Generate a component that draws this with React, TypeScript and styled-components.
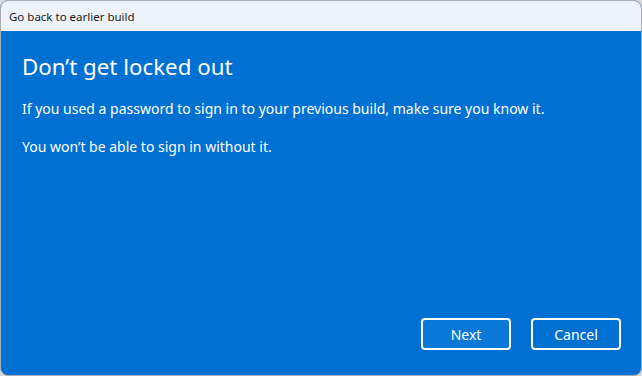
import React from "react";
import styled, { createGlobalStyle } from "styled-components";

const Global = createGlobalStyle`
  html, body { margin: 0; padding: 0; background: #d9d9d9; }
  body { font-family: "Segoe UI", "Noto Sans", "Open Sans", sans-serif; }
`;

const Window = styled.div`
  width: 642px;
  height: 376px;
  box-sizing: border-box;
  border: 1px solid #a9acb2;
  border-radius: 8px;
  overflow: hidden;
  display: flex;
  flex-direction: column;
  background: #0070d2;
`;

const TitleBar = styled.div`
  height: 30px;
  flex: none;
  background: #eef2fa;
  display: flex;
  align-items: center;
  padding-left: 8px;
  font-size: 11.5px;
  color: #1a1a1a;
`;

const Body = styled.div`
  flex: 1;
  display: flex;
  flex-direction: column;
  padding: 20px 20px 25px 21px;
  color: #ffffff;
`;

const Heading = styled.h1`
  margin: 0;
  font-size: 22.3px;
  font-weight: 400;
  line-height: 32px;
`;

const Para = styled.p<{ $top: number }>`
  margin: ${(p) => p.$top}px 0 0 0;
  font-size: 14px;
  line-height: 20px;
`;

const Footer = styled.div`
  margin-top: auto;
  display: flex;
  justify-content: flex-end;
  gap: 20px;
`;

const Button = styled.button<{ $primary?: boolean }>`
  width: 90px;
  height: 32px;
  box-sizing: border-box;
  border: 2px solid #ffffff;
  border-radius: 4px;
  background: ${(p) => (p.$primary ? "#0a78d7" : "transparent")};
  color: #ffffff;
  font-family: inherit;
  font-size: 14px;
  padding: 0;
`;

export default function App() {
  return (
    <>
      <Global />
      <Window>
        <TitleBar>Go back to earlier build</TitleBar>
        <Body>
          <Heading>Don’t get locked out</Heading>
          <Para $top={16}>
            If you used a password to sign in to your previous build, make sure you know it.
          </Para>
          <Para $top={18}>You won’t be able to sign in without it.</Para>
          <Footer>
            <Button $primary>Next</Button>
            <Button>Cancel</Button>
          </Footer>
        </Body>
      </Window>
    </>
  );
}
